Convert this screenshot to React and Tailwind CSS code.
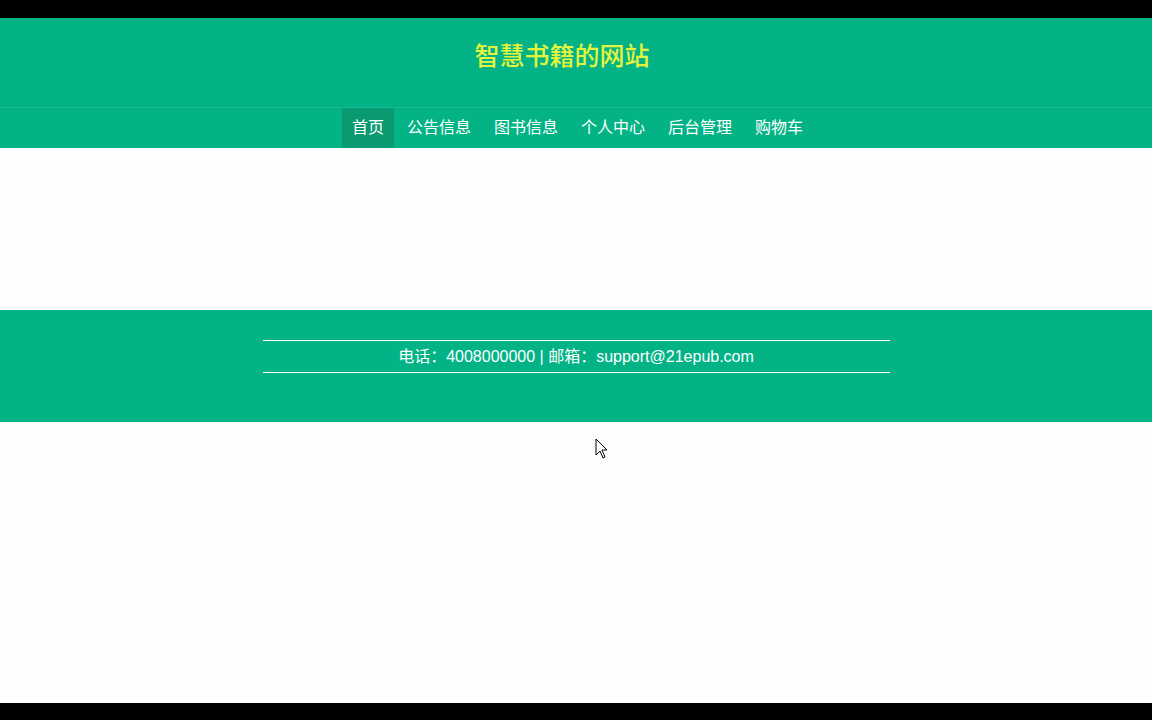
import React from "react";

const navItems = ["首页", "公告信息", "图书信息", "个人中心", "后台管理", "购物车"];

const App = () => {
  return (
    <div
      className="relative w-[1152px] h-[720px] flex flex-col bg-[#fdfdfd] overflow-hidden"
      style={{ fontFamily: '"Liberation Sans", "Noto Sans CJK SC", sans-serif' }}
    >
      <div className="h-[18px] bg-black" />

      {/* header */}
      <div className="h-[89px] bg-[#03b386] flex items-center justify-center">
        <h1 className="text-[25px] font-medium text-[#e4f43c] ml-[-28px] mt-[-12px]">
          智慧书籍的网站
        </h1>
      </div>

      {/* nav */}
      <div className="h-[41px] bg-[#03b386] border-t border-[#1bbb92] flex justify-center">
        <ul className="flex gap-[3px] ml-[3px]">
          {navItems.map((item, i) => (
            <li
              key={item}
              className={
                i === 0
                  ? "px-[10px] h-full flex items-center text-[16px] text-white bg-[#0a9a72]"
                  : "px-[10px] h-full flex items-center text-[16px] text-white"
              }
            >
              {item}
            </li>
          ))}
        </ul>
      </div>

      <div className="h-[162px] bg-[#fdfdfd]" />

      {/* footer */}
      <div className="h-[112px] bg-[#03b386] flex justify-center pt-[30px]">
        <div className="w-[627px] h-[33px] border-t border-b border-white flex items-center justify-center">
          <p className="text-[16px] text-white">
            电话：4008000000 | 邮箱：support@21epub.com
          </p>
        </div>
      </div>

      <div className="flex-1 bg-[#fdfdfd]" />
      <div className="h-[17px] bg-black" />

      {/* mouse cursor */}
      <svg
        className="absolute left-[595px] top-[438px]"
        width="14"
        height="22"
        viewBox="0 0 14 22"
      >
        <path
          d="M1 1 L1 17 L5 13 L8 20 L10 19 L7 12 L12 12 Z"
          fill="white"
          stroke="black"
          strokeWidth="1"
          strokeLinejoin="round"
        />
      </svg>
    </div>
  );
};

export default App;
